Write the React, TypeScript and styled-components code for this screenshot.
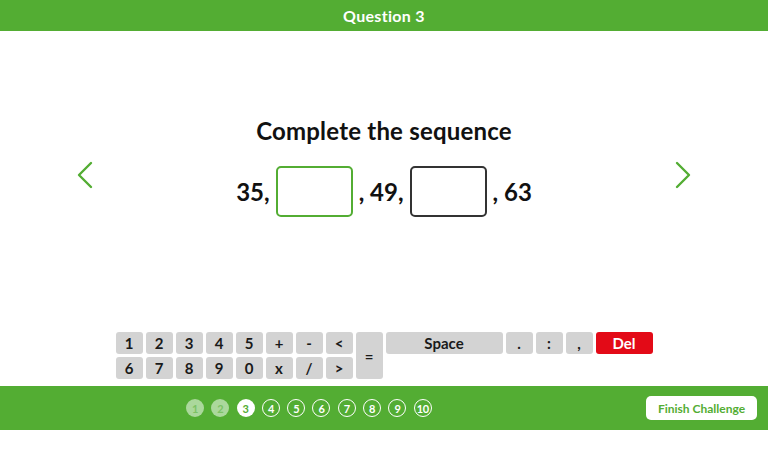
import React from 'react';
import styled, { createGlobalStyle } from 'styled-components';

const GREEN = '#53ad33';

const GlobalStyle = createGlobalStyle`
  html, body {
    margin: 0;
    padding: 0;
    background: #ffffff;
    font-family: Lato, "Open Sans", "Noto Sans", sans-serif;
  }
  * { box-sizing: border-box; }
`;

const Screen = styled.div`
  width: 768px;
  height: 456px;
  display: flex;
  flex-direction: column;
  background: #fff;
`;

const Header = styled.header`
  height: 31px;
  background: ${GREEN};
  color: #fff;
  display: flex;
  align-items: center;
  justify-content: center;
  font-size: 16px;
  font-weight: 700;
  letter-spacing: 0.3px;
`;

const Stage = styled.main`
  height: 355px;
  display: flex;
  flex-direction: column;
  padding-top: 85px;
  padding-bottom: 7px;
`;

const QuestionRow = styled.div`
  display: flex;
  align-items: flex-start;
  padding: 0 76px;
`;

const NavArrow = styled.button`
  width: 18px;
  height: 28px;
  margin-top: 45px;
  padding: 0;
  border: none;
  background: transparent;
  cursor: pointer;
  display: flex;
  align-items: center;
  justify-content: center;
`;

const Question = styled.div`
  flex: 1;
  display: flex;
  flex-direction: column;
  align-items: center;
  gap: 20px;
`;

const Title = styled.h1`
  margin: 0;
  font-size: 24px;
  line-height: 30px;
  font-weight: 700;
  letter-spacing: 0.2px;
  color: #111;
`;

const Sequence = styled.div`
  display: flex;
  align-items: center;
  gap: 6px;
  font-size: 24px;
  font-weight: 700;
  color: #111;
`;

const Term = styled.span`
  line-height: 50px;
`;

const AnswerBox = styled.div<{ $active: boolean }>`
  width: 77px;
  height: 51px;
  border-radius: 5px;
  border: 2px solid ${({ $active }) => ($active ? GREEN : '#333')};
  background: #fff;
`;

const Keypad = styled.div`
  margin-top: auto;
  align-self: center;
  display: grid;
  grid-template-columns: repeat(9, 27px) 117px repeat(3, 27px) 57px;
  grid-template-rows: 22px 22px;
  gap: 3px;
`;

const Key = styled.button<{ $danger?: boolean; $tall?: boolean }>`
  grid-column: ${({ $tall }) => ($tall ? '9' : 'auto')};
  grid-row: ${({ $tall }) => ($tall ? '1 / span 2' : 'auto')};
  border: none;
  border-radius: 3px;
  padding: 0;
  background: ${({ $danger }) => ($danger ? '#e30a17' : '#d3d3d3')};
  color: ${({ $danger }) => ($danger ? '#fff' : '#1a1a1a')};
  font-family: inherit;
  font-size: 15px;
  font-weight: 700;
  display: flex;
  align-items: center;
  justify-content: center;
  cursor: pointer;
`;

const Footer = styled.footer`
  height: 44px;
  background: ${GREEN};
  display: flex;
  align-items: center;
  justify-content: space-between;
  padding: 0 11px 0 186px;
`;

const Pager = styled.div`
  display: flex;
  gap: 7.3px;
`;

type DotState = 'done' | 'current' | 'todo';

const Dot = styled.span<{ $state: DotState }>`
  width: 18px;
  height: 18px;
  border-radius: 50%;
  display: flex;
  align-items: center;
  justify-content: center;
  font-size: 11px;
  font-weight: 700;
  letter-spacing: -0.4px;
  border: 1px solid
    ${({ $state }) => ($state === 'todo' ? '#fff' : 'transparent')};
  background: ${({ $state }) =>
    $state === 'done' ? '#abd89c' : $state === 'current' ? '#fff' : 'transparent'};
  color: ${({ $state }) =>
    $state === 'done' ? '#7cc265' : $state === 'current' ? GREEN : '#fff'};
`;

const FinishButton = styled.button`
  width: 111px;
  height: 24px;
  border: none;
  border-radius: 5px;
  background: #fff;
  color: ${GREEN};
  font-family: inherit;
  font-size: 12px;
  font-weight: 700;
  cursor: pointer;
`;

const Chevron = ({ dir }: { dir: 'left' | 'right' }) => (
  <svg width="18" height="28" viewBox="0 0 18 28">
    <path
      d={dir === 'left' ? 'M15 2 L3 14 L15 26' : 'M3 2 L15 14 L3 26'}
      fill="none"
      stroke={GREEN}
      strokeWidth="2.4"
      strokeLinecap="round"
      strokeLinejoin="round"
    />
  </svg>
);

const ROW_ONE = ['1', '2', '3', '4', '5', '+', '-', '<'];
const ROW_TWO = ['6', '7', '8', '9', '0', 'x', '/', '>'];

const App = (): React.ReactElement => {
  const current = 3;
  const dots = Array.from({ length: 10 }, (_, i) => i + 1);

  return (
    <>
      <GlobalStyle />
      <Screen>
        <Header>Question 3</Header>
        <Stage>
          <QuestionRow>
            <NavArrow aria-label="Previous">
              <Chevron dir="left" />
            </NavArrow>
            <Question>
              <Title>Complete the sequence</Title>
              <Sequence>
                <Term>35,</Term>
                <AnswerBox $active />
                <Term>, 49,</Term>
                <AnswerBox $active={false} />
                <Term>, 63</Term>
              </Sequence>
            </Question>
            <NavArrow aria-label="Next">
              <Chevron dir="right" />
            </NavArrow>
          </QuestionRow>
          <Keypad>
            {ROW_ONE.map((k) => {
              return <Key key={k}>{k}</Key>;
            })}
            <Key $tall>=</Key>
            <Key>Space</Key>
            <Key>.</Key>
            <Key>:</Key>
            <Key>,</Key>
            <Key $danger>Del</Key>
            {ROW_TWO.map((k) => {
              return <Key key={k}>{k}</Key>;
            })}
          </Keypad>
        </Stage>
        <Footer>
          <Pager>
            {dots.map((n) => {
              const state: DotState = n < current ? 'done' : n === current ? 'current' : 'todo';
              return (
                <Dot key={n} $state={state}>
                  {n}
                </Dot>
              );
            })}
          </Pager>
          <FinishButton>Finish Challenge</FinishButton>
        </Footer>
      </Screen>
    </>
  );
};

export default App;
